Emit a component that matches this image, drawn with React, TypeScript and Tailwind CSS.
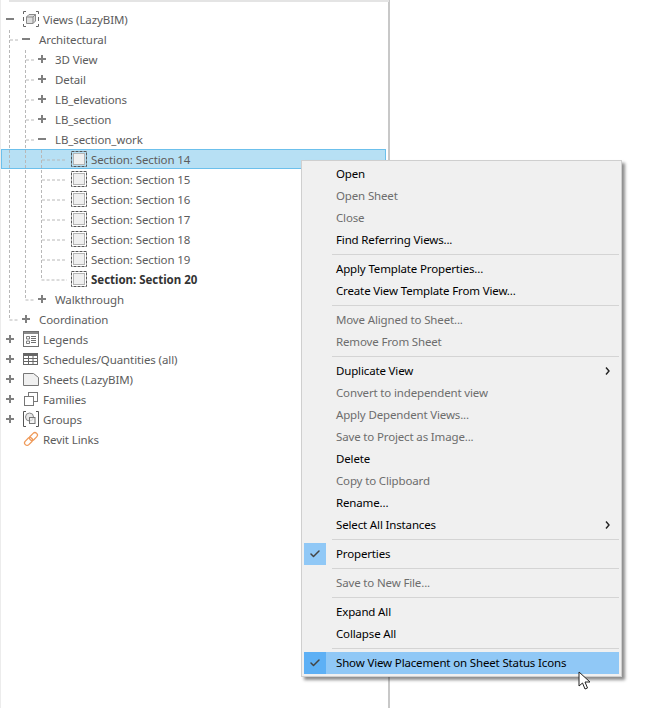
import React from 'react';
import { Check } from 'lucide-react';

const sectionNames = ['Section: Section 14', 'Section: Section 15', 'Section: Section 16', 'Section: Section 17', 'Section: Section 18', 'Section: Section 19'];

function Toggle({ open }: { open?: boolean }) {
  return (
    <svg width="8" height="8" viewBox="0 0 8 8" className="shrink-0 -translate-y-px">
      <rect x="0" y="3" width="8" height="2" fill="#808080" />
      {!open && <rect x="3" y="0" width="2" height="8" fill="#808080" />}
    </svg>
  );
}

function SectionIcon() {
  return (
    <svg width="16" height="16" viewBox="0 0 16 16" className="shrink-0 -translate-y-px">
      <rect x="0.5" y="0.5" width="15" height="15" fill="none" stroke="#555" strokeDasharray="3 1" />
      <rect x="2.5" y="2.5" width="11" height="11" fill="#f0f0f0" stroke="#b4b4b4" />
    </svg>
  );
}

function ViewsIcon() {
  return (
    <svg width="16" height="16" viewBox="0 0 16 16" className="shrink-0 -translate-y-px">
      <path d="M3 .5H.5V3M13 .5H15.5V3M.5 6V10M15.5 6V10M.5 13V15.5H3M15.5 13V15.5H13" fill="none" stroke="#666" />
      <path d="M3.5 6L6 3.5H12.5V10L10 12.5H3.5Z" fill="#dedede" stroke="#8a8a8a" />
      <path d="M3.5 6H10V12.5M10 6L12.5 3.5" fill="none" stroke="#8a8a8a" />
    </svg>
  );
}

function LegendsIcon() {
  return (
    <svg width="16" height="16" viewBox="0 0 16 16" className="shrink-0 -translate-y-px">
      <rect x="0.5" y="0.5" width="15" height="15" fill="#fff" stroke="#707070" />
      <rect x="1" y="1" width="14" height="2" fill="#8a8a8a" />
      <path d="M3.5 5.5H6.5V8H3.5ZM3.5 10H6.5V12.5H3.5Z" fill="#fff" stroke="#707070" strokeWidth="0.9" />
      <path d="M8 5.5H13M8 7.5H13M8 9.5H13M8 11.5H13" stroke="#707070" />
    </svg>
  );
}

function SchedulesIcon() {
  return (
    <svg width="16" height="12" viewBox="0 0 16 12" className="shrink-0 -translate-y-px">
      <rect x="0.5" y="0.5" width="14" height="11" fill="#fff" stroke="#666" />
      <rect x="0.5" y="0.5" width="14" height="2.5" fill="#666" />
      <path d="M5.5 3V11M10 3V11M1 5.5H14M1 8.5H14" stroke="#666" />
    </svg>
  );
}

function SheetsIcon() {
  return (
    <svg width="16" height="13" viewBox="0 0 16 13" className="shrink-0 -translate-y-px">
      <path d="M.5 .5H10.5L15.5 4.5V12.5H.5Z" fill="#f0f0f0" stroke="#777" />
    </svg>
  );
}

function FamiliesIcon() {
  return (
    <svg width="16" height="14" viewBox="0 0 16 14" className="shrink-0 -translate-y-px">
      <rect x="5.5" y="0.5" width="9" height="9" fill="#fff" stroke="#777" />
      <rect x="1.5" y="4.5" width="9" height="9" fill="#fff" stroke="#777" />
    </svg>
  );
}

function GroupsIcon() {
  return (
    <svg width="16" height="16" viewBox="0 0 16 16" className="shrink-0 -translate-y-px">
      <path d="M3 .5H.5V15.5H3M13 .5H15.5V15.5H13" fill="none" stroke="#555" />
      <circle cx="6.5" cy="6" r="4" fill="#e8e8e8" stroke="#888" />
      <rect x="6.5" y="6.5" width="5.5" height="6" fill="#f0f0f0" fillOpacity="0.7" stroke="#777" />
    </svg>
  );
}

function LinkIcon() {
  return (
    <svg width="16" height="16" viewBox="0 0 16 16" className="shrink-0 -translate-y-px">
      <g fill="none" stroke="#ef9a5a" strokeWidth="1.3" transform="rotate(-45 8 8)">
        <rect x="0" y="5.5" width="9" height="5" rx="2.5" />
        <rect x="7" y="5.5" width="9" height="5" rx="2.5" />
      </g>
    </svg>
  );
}

// one row of the browser tree; pad is the left offset of the toggle slot
function Row({ pad, toggle, icon, label, labelGap }: { pad: string; toggle?: 'open' | 'closed'; icon?: React.ReactNode; label: string; labelGap: string }) {
  return (
    <div className={`relative flex h-5 items-center ${pad}`}>
      <div className="flex w-[10px] shrink-0 justify-center">{toggle && <Toggle open={toggle === 'open'} />}</div>
      {icon && <div className="ml-[8px] flex w-[16px] shrink-0 justify-center">{icon}</div>}
      <span className={`${labelGap} text-[11.5px] tracking-[-0.1px] text-[#5c5c5c]`}>{label}</span>
    </div>
  );
}

function MenuItem({ label, disabled, arrow, checked, active }: { label: string; disabled?: boolean; arrow?: boolean; checked?: boolean; active?: boolean }) {
  return (
    <div className={`flex h-[22px] items-center ${active ? 'bg-[#90c8f6]' : ''}`}>
      <div className={`flex h-[22px] w-[22px] shrink-0 items-center justify-center ${checked ? (active ? 'bg-[#5db0f5]' : 'bg-[#90c8f6]') : ''}`}>
        {checked && <Check size={12} strokeWidth={3} className="text-[#444]" />}
      </div>
      <span className={`ml-[10px] flex-1 text-[11.5px] tracking-[-0.15px] ${disabled ? 'text-[#6d6d6d]' : 'text-black'}`}>{label}</span>
      {arrow && (
        <svg width="5" height="8" viewBox="0 0 5 8" className="mr-[9px]">
          <path d="M1 .5L4 4L1 7.5" fill="none" stroke="#222" strokeWidth="1.4" />
        </svg>
      )}
    </div>
  );
}

function Sep() {
  return (
    <div className="ml-[28px] flex h-[7px] items-center">
      <div className="h-px w-full bg-[#d4d4d4]" />
    </div>
  );
}

export default function App() {
  return (
    <div className="relative h-[708px] w-[650px] overflow-hidden bg-white font-['Noto_Sans',sans-serif]">
      {/* browser panel */}
      <div className="h-[708px] w-[390px] border-r-2 border-l border-r-[#c8c8c8] border-l-[#ececec] pt-[10px]">
        <div className="absolute left-[9px] top-0 h-[2px] w-[380px] bg-[#e4e4e4]" />
        <Row pad="pl-[4px]" toggle="open" icon={<ViewsIcon />} label="Views (LazyBIM)" labelGap="ml-[4px]" />
        <Row pad="pl-[20px]" toggle="open" label="Architectural" labelGap="ml-[8px]" />
        <Row pad="pl-[36px]" toggle="closed" label="3D View" labelGap="ml-[8px]" />
        <Row pad="pl-[36px]" toggle="closed" label="Detail" labelGap="ml-[8px]" />
        <Row pad="pl-[36px]" toggle="closed" label="LB_elevations" labelGap="ml-[8px]" />
        <Row pad="pl-[36px]" toggle="closed" label="LB_section" labelGap="ml-[8px]" />
        <Row pad="pl-[36px]" toggle="open" label="LB_section_work" labelGap="ml-[8px]" />
        {sectionNames.map((name, i) => (
          <div key={name} className="relative flex h-5 items-center pl-[70px]">
            {i === 0 && <div className="absolute -top-px bottom-px left-0 right-[2px] border border-[#6cc0ec] bg-[#b7e0f4]" />}
            <div className="relative flex items-center">
              <SectionIcon />
              <span className="ml-[4px] text-[11.5px] tracking-[-0.1px] text-[#5c5c5c]">{name}</span>
            </div>
          </div>
        ))}
        <div className="relative flex h-5 items-center pl-[70px]">
          <SectionIcon />
          <span className="ml-[4px] text-[11.5px] font-bold tracking-[-0.03px] text-[#333]">Section: Section 20</span>
        </div>
        <Row pad="pl-[36px]" toggle="closed" label="Walkthrough" labelGap="ml-[8px]" />
        <Row pad="pl-[20px]" toggle="closed" label="Coordination" labelGap="ml-[8px]" />
        <Row pad="pl-[4px]" toggle="closed" icon={<LegendsIcon />} label="Legends" labelGap="ml-[4px]" />
        <Row pad="pl-[4px]" toggle="closed" icon={<SchedulesIcon />} label="Schedules/Quantities (all)" labelGap="ml-[4px]" />
        <Row pad="pl-[4px]" toggle="closed" icon={<SheetsIcon />} label="Sheets (LazyBIM)" labelGap="ml-[4px]" />
        <Row pad="pl-[4px]" toggle="closed" icon={<FamiliesIcon />} label="Families" labelGap="ml-[4px]" />
        <Row pad="pl-[4px]" toggle="closed" icon={<GroupsIcon />} label="Groups" labelGap="ml-[4px]" />
        <Row pad="pl-[4px]" icon={<LinkIcon />} label="Revit Links" labelGap="ml-[4px]" />
        {/* tree guide lines */}
        <svg width="80" height="340" className="absolute left-0 top-0" fill="none" stroke="#b8b8b8" strokeDasharray="3 2">
          <path d="M9.5 30V320H18" />
          <path d="M25.5 50V300H34" />
          <path d="M41.5 150V280H67" />
          <path d="M10 40H18" />
          <path d="M26 60H34M26 80H34M26 100H34M26 120H34M26 140H34" />
          <path d="M42 160H67M42 180H67M42 200H67M42 220H67M42 240H67M42 260H67" />
        </svg>
      </div>

      {/* context menu */}
      <div className="absolute left-[301px] top-[160px] w-[321px] border border-[#cfcfcf] bg-[#f0f0f0] p-[2px] shadow-[3px_3px_3px_rgba(0,0,0,0.45)]">
        <MenuItem label="Open" />
        <MenuItem label="Open Sheet" disabled />
        <MenuItem label="Close" disabled />
        <MenuItem label="Find Referring Views..." />
        <Sep />
        <MenuItem label="Apply Template Properties..." />
        <MenuItem label="Create View Template From View..." />
        <Sep />
        <MenuItem label="Move Aligned to Sheet..." disabled />
        <MenuItem label="Remove From Sheet" disabled />
        <Sep />
        <MenuItem label="Duplicate View" arrow />
        <MenuItem label="Convert to independent view" disabled />
        <MenuItem label="Apply Dependent Views..." disabled />
        <MenuItem label="Save to Project as Image..." disabled />
        <MenuItem label="Delete" />
        <MenuItem label="Copy to Clipboard" disabled />
        <MenuItem label="Rename..." />
        <MenuItem label="Select All Instances" arrow />
        <Sep />
        <MenuItem label="Properties" checked />
        <Sep />
        <MenuItem label="Save to New File..." disabled />
        <Sep />
        <MenuItem label="Expand All" />
        <MenuItem label="Collapse All" />
        <Sep />
        <MenuItem label="Show View Placement on Sheet Status Icons" checked active />
      </div>

      {/* mouse pointer */}
      <svg width="14" height="20" viewBox="0 0 14 20" className="absolute left-[578px] top-[671px]">
        <path d="M1 1V15L4.5 12L7 18L9.5 17L7 11H12Z" fill="#fff" stroke="#222" strokeWidth="1" strokeLinejoin="round" />
      </svg>
    </div>
  );
}
